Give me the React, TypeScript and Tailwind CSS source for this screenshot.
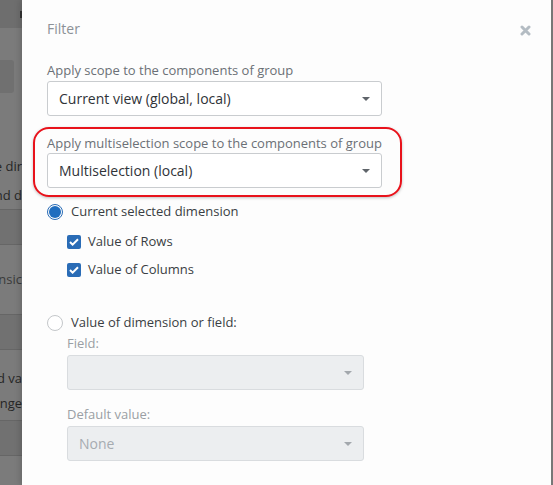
import React from 'react'

function Caret({ disabled }: { disabled?: boolean }) {
    return (
        <svg width="8" height="4" viewBox="0 0 8 4" className="shrink-0">
            <path d="M0 0h8L4 4z" fill={disabled ? '#a3a8ad' : '#5f646a'} />
        </svg>
    )
}

function Select({ value, disabled, width }: { value: string; disabled?: boolean; width: string }) {
    return (
        <div
            className={`${width} h-[35px] flex items-center justify-between pl-[11px] pr-[11px] rounded-[3px] border ${
                disabled ? 'bg-[#eceef0] border-[#d9dcdf] text-[#a6abb0]' : 'bg-white border-[#c9cccf] text-[#2f3338]'
            } text-[14px]`}
        >
            <span>{value}</span>
            <Caret disabled={disabled} />
        </div>
    )
}

function Check({ label }: { label: string }) {
    return (
        <div className="flex items-center gap-[7px] h-[28px]">
            <div className="w-[14px] h-[14px] rounded-[2px] bg-[#2a6cb6] flex items-center justify-center">
                <svg width="10" height="8" viewBox="0 0 10 8">
                    <path d="M1 4l2.6 2.6L9 1.2" stroke="white" strokeWidth="2" fill="none" />
                </svg>
            </div>
            <span className="text-[#3a3e43]">{label}</span>
        </div>
    )
}

export default function App() {
    return (
        <div className="w-[553px] h-[485px] flex overflow-hidden" style={{ fontFamily: '"Open Sans", sans-serif' }}>
            {/* dimmed page behind the dialog */}
            <div className="w-[22px] shrink-0 bg-[#7b7b7b] flex flex-col text-[13px] text-[#262626] overflow-hidden whitespace-nowrap">
                <div className="h-[28px] bg-[#6e6e6e] flex items-center justify-end">
                    <div className="w-[2px] h-[7px] bg-[#333]" />
                </div>
                <div className="h-[32px]" />
                <div className="h-[33px] w-[14px] bg-[#707070] rounded-r-[3px]" />
                <div className="h-[57px]" />
                <div className="h-[33px] flex items-center justify-end">e dir</div>
                <div className="h-[27px] flex items-center justify-end border-b border-[#666]">nd d</div>
                <div className="h-[35px] bg-[#717171] border-b border-[#666]" />
                <div className="h-[70px] flex items-center justify-end text-[#3a3a3a] border-b border-[#666]">nsic</div>
                <div className="h-[35px] bg-[#717171] border-b border-[#666]" />
                <div className="h-[38px] flex items-end justify-end">d va</div>
                <div className="h-[33px] flex items-center justify-end border-b border-[#666]">ange</div>
                <div className="h-[35px] bg-[#717171] border-b border-[#666]" />
                <div className="flex-1" />
            </div>

            {/* dialog */}
            <div className="flex-1 bg-[#fdfdfd] border-r-2 border-[#777] shadow-[-2px_0_6px_rgba(0,0,0,0.15)] pl-[25px] pt-[19px] text-[13px] relative">
                <div className="text-[14px] text-[#8c9197] leading-[20px]">Filter</div>
                <div className="absolute right-[20px] top-[25px]">
                    <svg width="11" height="11" viewBox="0 0 11 11">
                        <path d="M2 2l7 7M9 2l-7 7" stroke="#b4bcc3" strokeWidth="3" strokeLinecap="round" />
                    </svg>
                </div>

                <div className="mt-[22px] text-[#6b7076] leading-[18px]">Apply scope to the components of group</div>
                <div className="mt-[2px]">
                    <Select value="Current view (global, local)" width="w-[335px]" />
                </div>

                <div className="mt-[11px] -ml-[14px] w-[369px] h-[70px] border-2 border-[#e8121b] rounded-[16px] shadow-[0_1px_3px_rgba(0,0,0,0.25)] pl-[12px] pt-[5px]">
                    <div className="text-[#6b7076] leading-[18px]">Apply multiselection scope to the components of group</div>
                    <div className="mt-[1px]">
                        <Select value="Multiselection (local)" width="w-[335px]" />
                    </div>
                </div>

                <div className="mt-[6px] flex items-center gap-[8px] h-[18px] text-[#3a3e43]">
                    <div className="w-[16px] h-[16px] rounded-full border border-[#2a6cb6] flex items-center justify-center">
                        <div className="w-[12px] h-[12px] rounded-full bg-[#1f6dbf]" />
                    </div>
                    <span>Current selected dimension</span>
                </div>
                <div className="ml-[20px] mt-[7px] flex flex-col">
                    <Check label="Value of Rows" />
                    <Check label="Value of Columns" />
                </div>

                <div className="mt-[30px] flex items-center gap-[8px] h-[18px] text-[#3a3e43]">
                    <div className="w-[16px] h-[16px] rounded-full border border-[#c4c7ca] bg-white" />
                    <span>Value of dimension or field:</span>
                </div>
                <div className="ml-[20px]">
                    <div className="mt-[2px] text-[#9a9fa4] leading-[18px]">Field:</div>
                    <div className="mt-[3px]">
                        <Select value="" disabled width="w-[297px]" />
                    </div>
                    <div className="mt-[15px] text-[#9a9fa4] leading-[18px]">Default value:</div>
                    <div className="mt-[3px]">
                        <Select value="None" disabled width="w-[297px]" />
                    </div>
                </div>
            </div>
        </div>
    )
}
